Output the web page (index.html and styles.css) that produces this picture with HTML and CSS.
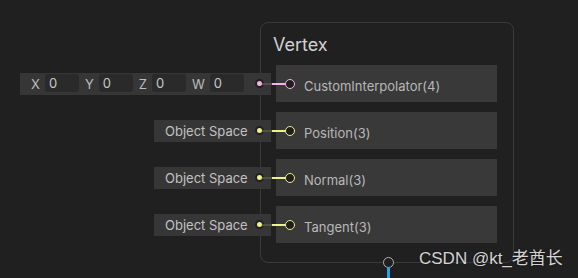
FILE: index.html
```html
<!DOCTYPE html>
<html lang="en">
<head>
    <meta charset="UTF-8">
    <meta name="viewport" content="width=device-width, initial-scale=1.0">
    <title>Vertex</title>
    <link rel="stylesheet" href="styles.css">
</head>
<body>
    <div class="graph">
        <div class="node">
            <div class="node-title">Vertex</div>

            <div class="slots">
                <div class="slot pink">
                    <div class="input vec4">
                        <span class="axis">X</span><span class="field">0</span>
                        <span class="axis">Y</span><span class="field">0</span>
                        <span class="axis">Z</span><span class="field">0</span>
                        <span class="axis">W</span><span class="field">0</span>
                        <span class="dot"></span>
                    </div>
                    <span class="wire"></span>
                    <span class="port"></span>
                    <span class="label">CustomInterpolator(4)</span>
                </div>

                <div class="slot yellow">
                    <div class="input space">
                        <span class="text">Object Space</span>
                        <span class="dot"></span>
                    </div>
                    <span class="wire"></span>
                    <span class="port"></span>
                    <span class="label">Position(3)</span>
                </div>

                <div class="slot yellow">
                    <div class="input space">
                        <span class="text">Object Space</span>
                        <span class="dot"></span>
                    </div>
                    <span class="wire"></span>
                    <span class="port"></span>
                    <span class="label">Normal(3)</span>
                </div>

                <div class="slot yellow">
                    <div class="input space">
                        <span class="text">Object Space</span>
                        <span class="dot"></span>
                    </div>
                    <span class="wire"></span>
                    <span class="port"></span>
                    <span class="label">Tangent(3)</span>
                </div>
            </div>

            <span class="out-port"></span>
        </div>

        <div class="watermark">CSDN @kt_老酋长</div>
    </div>
</body>
</html>
```

FILE: styles.css
```css
body {
    margin: 0;
    background: #202020;
    font-family: Inter, "Noto Sans", sans-serif;
}
.graph {
    position: relative;
    width: 578px;
    height: 278px;
    overflow: hidden;
    background: #202020;
}
.node {
    position: absolute;
    left: 260px;
    top: 22px;
    width: 254px;
    height: 241px;
    box-sizing: border-box;
    border: 1px solid #3a3a3a;
    border-radius: 8px;
    padding: 12px 0 0 15px;
}
.node-title {
    margin-left: -3px;
    margin-bottom: 10px;
    font-size: 18px;
    line-height: 20px;
    color: #d2d2d2;
}
.slots {
    display: flex;
    flex-direction: column;
    gap: 10px;
}
.slot {
    position: relative;
    display: flex;
    align-items: center;
    width: 221px;
    height: 37px;
    box-sizing: border-box;
    padding: 5px 0 0 28px;
    background: #393939;
}
.slot.pink { --c: #f3b3e6; --dim: #5a4a57; }
.slot.yellow { --c: #eef08a; --dim: #505244; }
.label {
    font-size: 13px;
    color: #b8b8b8;
}
.port {
    position: absolute;
    left: 9px;
    top: 50%;
    width: 10px;
    height: 10px;
    margin-top: -5px;
    box-sizing: border-box;
    border: 1.5px solid var(--c);
    border-radius: 50%;
    background: #1f1f1f;
}
.wire {
    position: absolute;
    left: -14px;
    top: 50%;
    width: 24px;
    height: 2px;
    margin-top: -1px;
    background: linear-gradient(to right, var(--dim) 10px, var(--c) 10px);
}
.input {
    position: absolute;
    right: calc(100% + 5px);
    top: 50%;
    height: 22px;
    transform: translateY(-50%);
    display: flex;
    align-items: center;
    box-sizing: border-box;
    background: #363636;
    font-size: 13px;
    color: #c2c2c2;
}
.input.space {
    width: 117px;
    padding-left: 11px;
}
.input.vec4 {
    width: 251px;
    padding-left: 10px;
}
.input .text {
    flex: 1;
}
.axis {
    margin: 0 5px 0 6px;
    color: #bdbdbd;
}
.axis:first-child {
    margin-left: 1px;
}
.field {
    width: 34px;
    height: 18px;
    margin-top: -1px;
    box-sizing: border-box;
    padding-left: 4px;
    border-radius: 3px;
    background: #2a2a2a;
    line-height: 18px;
    color: #c8c8c8;
}
.vec4 .dot {
    margin-left: auto;
}
.dot {
    width: 9px;
    height: 9px;
    margin-right: 7px;
    box-sizing: border-box;
    border: 2px solid #202020;
    border-radius: 50%;
    background: var(--c);
}
.out-port {
    position: absolute;
    left: 122px;
    bottom: -6px;
    width: 11px;
    height: 11px;
    box-sizing: border-box;
    border: 1.5px solid #b0b0b0;
    border-radius: 50%;
    background: #202020;
}
.out-port::after {
    content: "";
    position: absolute;
    left: 2.5px;
    top: 9px;
    width: 3px;
    height: 14px;
    background: #23a3f0;
}
.watermark {
    position: absolute;
    left: 419px;
    top: 248px;
    font-family: "Liberation Sans", "Noto Sans CJK SC", sans-serif;
    font-size: 17px;
    line-height: 22px;
    color: #d4d4d4;
    text-shadow: 0 0 2px rgba(0, 0, 0, 0.6);
    white-space: nowrap;
}
```
